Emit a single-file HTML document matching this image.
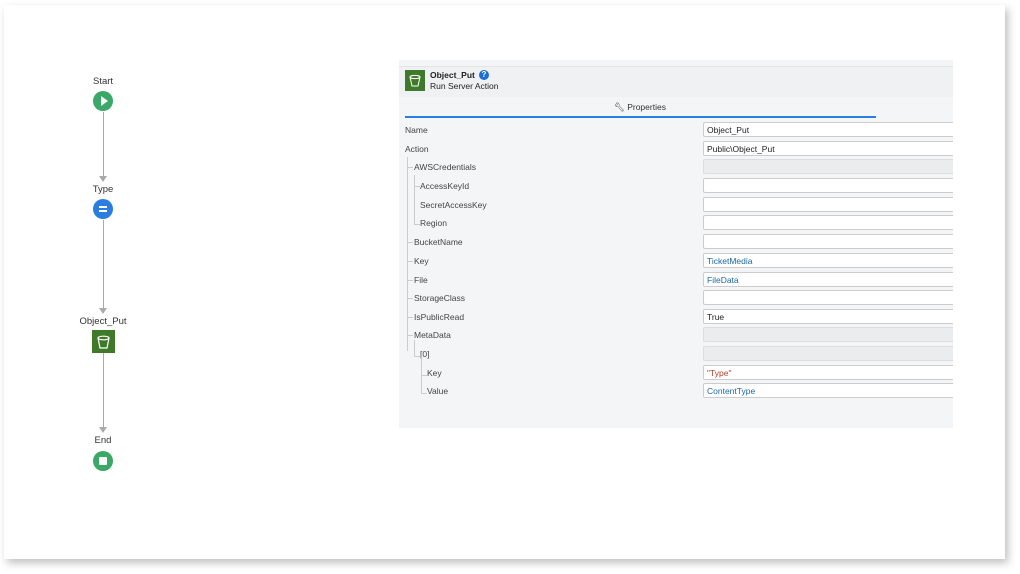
<!DOCTYPE html>
<html><head><style>
body{margin:0;width:1020px;height:574px;background:#fff;font-family:"Liberation Sans",sans-serif;position:relative;overflow:hidden}
.card{position:absolute;left:4px;top:5px;width:1001px;height:554px;background:#fff;box-shadow:3px 4px 8px rgba(0,0,0,.25)}
.lbl{position:absolute;font-size:9.5px;color:#333;transform:translateX(-50%);white-space:nowrap}
.line{position:absolute;left:103px;width:1px;background:#aaa}
.arr{position:absolute;left:99px;width:0;height:0;border-left:4px solid transparent;border-right:4px solid transparent;border-top:6px solid #aaa}
.panel{position:absolute;left:399px;top:60px;width:554px;height:368px;background:#f4f5f6}
.row{position:absolute;left:0;width:554px;height:17px;font-size:8.5px;color:#444}
.row span{position:absolute;top:3px}
.inp{position:absolute;left:304px;width:250px;height:15px;background:#fff;border:1px solid #ccc;border-right:none;border-radius:2px 0 0 2px;font-size:8.5px;line-height:15px;padding-left:3px;box-sizing:border-box;color:#222}
.inp.g{background:#ebecee;border-color:#ddd}
.t{position:absolute;border-left:1px solid #ccc;border-bottom:1px solid #ccc}
.h{position:absolute;height:1px;width:5px;background:#ccc}
</style></head><body>
<div class="card"></div>
<div class="lbl" style="left:103px;top:76px">Start</div>
<div style="position:absolute;left:93px;top:91px;width:20px;height:20px;border-radius:50%;background:#3aa866"><div style="position:absolute;left:8px;top:5px;border-left:7px solid #fff;border-top:5px solid transparent;border-bottom:5px solid transparent"></div></div>
<div class="line" style="top:112px;height:64px"></div><div class="arr" style="top:176px"></div>
<div class="lbl" style="left:103px;top:184px">Type</div>
<div style="position:absolute;left:93px;top:199px;width:20px;height:20px;border-radius:50%;background:#2a7de1"><div style="position:absolute;left:6px;top:7px;width:8px;height:2px;background:#fff"></div><div style="position:absolute;left:6px;top:11px;width:8px;height:2px;background:#fff"></div></div>
<div class="line" style="top:220px;height:88px"></div><div class="arr" style="top:308px"></div>
<div class="lbl" style="left:103px;top:316px">Object_Put</div>
<div style="position:absolute;left:92px;top:330px;width:23px;height:23px;background:#3f7a2a"><svg width="23" height="23"><path d="M6 8 L8 18 H15 L17 8" stroke="#fff" fill="none" stroke-width="1.2"/><ellipse cx="11.5" cy="8" rx="5.5" ry="1.8" stroke="#fff" fill="none" stroke-width="1.2"/></svg></div>
<div class="line" style="top:353px;height:74px"></div><div class="arr" style="top:427px"></div>
<div class="lbl" style="left:103px;top:435px">End</div>
<div style="position:absolute;left:93px;top:451px;width:20px;height:20px;border-radius:50%;background:#3aa866"><div style="position:absolute;left:6px;top:6px;width:8px;height:8px;border-radius:1px;background:#fff"></div></div>

<div class="panel">
<div style="position:absolute;left:0;top:6px;width:554px;height:30px;background:#f0f1f2;border-top:1px solid #e4e4e4"></div>
<div style="position:absolute;left:6px;top:10px;width:20px;height:21px;background:#3f7a2a"><svg width="20" height="21"><path d="M5 7 L7 16 H13 L15 7" stroke="#fff" fill="none" stroke-width="1"/><ellipse cx="10" cy="7" rx="5" ry="1.6" stroke="#fff" fill="none"/></svg></div>
<div style="position:absolute;left:31px;top:10px;font-size:8.5px;font-weight:bold;color:#222">Object_Put</div>
<div style="position:absolute;left:80px;top:10px;width:10px;height:10px;border-radius:50%;background:#1a6fd6;color:#fff;font-size:8px;font-weight:bold;text-align:center;line-height:10px">?</div>
<div style="position:absolute;left:31px;top:21px;font-size:8.5px;color:#222">Run Server Action</div>
<div style="position:absolute;left:6px;top:42px;width:470px;text-align:center;font-size:8.5px;color:#333">&#x1F527;&#xFE0E; Properties</div>
<div style="position:absolute;left:6px;top:56px;width:471px;height:2px;background:#2a7de1"></div>
<div class="row" style="top:62px"><span style="left:6px">Name</span><div class="inp">Object_Put</div></div>
<div class="row" style="top:81px"><span style="left:6px">Action</span><div class="inp">Public\Object_Put</div></div>
<div class="t" style="left:8px;top:97px;width:0;height:194px;border-bottom:none"></div>
<div class="h" style="left:9px;top:107px"></div>
<div class="h" style="left:9px;top:182px"></div>
<div class="h" style="left:9px;top:201px"></div>
<div class="h" style="left:9px;top:220px"></div>
<div class="h" style="left:9px;top:238px"></div>
<div class="h" style="left:9px;top:257px"></div>
<div class="h" style="left:9px;top:275px"></div>
<div class="row" style="top:99px"><span style="left:15px">AWSCredentials</span><div class="inp g"></div></div>
<div class="t" style="left:15px;top:115px;width:5px;height:11px"></div>
<div class="t" style="left:15px;top:126px;width:5px;height:19px;border-bottom:none"></div>
<div class="t" style="left:15px;top:145px;width:5px;height:19px"></div>
<div class="row" style="top:118px"><span style="left:21px">AccessKeyId</span><div class="inp"></div></div>
<div class="row" style="top:137px"><span style="left:21px">SecretAccessKey</span><div class="inp"></div></div>
<div class="row" style="top:155px"><span style="left:21px">Region</span><div class="inp"></div></div>
<div class="row" style="top:174px"><span style="left:15px">BucketName</span><div class="inp"></div></div>
<div class="row" style="top:193px"><span style="left:15px">Key</span><div class="inp" style="color:#1b67a8">TicketMedia</div></div>
<div class="row" style="top:212px"><span style="left:15px">File</span><div class="inp" style="color:#1b67a8">FileData</div></div>
<div class="row" style="top:230px"><span style="left:15px">StorageClass</span><div class="inp"></div></div>
<div class="row" style="top:249px"><span style="left:15px">IsPublicRead</span><div class="inp">True</div></div>
<div class="row" style="top:267px"><span style="left:15px">MetaData</span><div class="inp g"></div></div>
<div class="t" style="left:15px;top:280px;width:5px;height:16px"></div>
<div class="row" style="top:286px"><span style="left:21px">[0]</span><div class="inp g"></div></div>
<div class="t" style="left:22px;top:297px;width:5px;height:18px"></div>
<div class="t" style="left:22px;top:315px;width:5px;height:18px"></div>
<div class="row" style="top:305px"><span style="left:28px">Key</span><div class="inp" style="color:#b0402a">"Type"</div></div>
<div class="row" style="top:323px"><span style="left:28px">Value</span><div class="inp" style="color:#1b67a8">ContentType</div></div>
</div>
</body></html>
